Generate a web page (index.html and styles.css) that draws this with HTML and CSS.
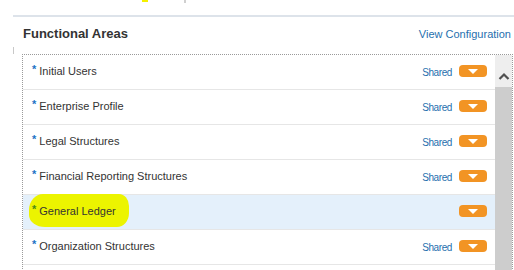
FILE: index.html
```html
<!DOCTYPE html>
<html>
<head>
<meta charset="utf-8">
<link rel="stylesheet" href="styles.css">
</head>
<body>
<div class="page">
  <div class="topbar">
    <span class="mark-yellow"></span>
    <span class="mark-gray"></span>
  </div>
  <div class="header">
    <h2 class="title">Functional Areas</h2>
    <a class="link">View Configuration</a>
  </div>
  <div class="tick"></div>
  <div class="panel">
    <div class="list">
      <div class="row"><span class="req">*</span><span class="name">Initial Users</span><span class="shared">Shared</span><span class="btn"><span class="tri"></span></span></div>
      <div class="row"><span class="req">*</span><span class="name">Enterprise Profile</span><span class="shared">Shared</span><span class="btn"><span class="tri"></span></span></div>
      <div class="row"><span class="req">*</span><span class="name">Legal Structures</span><span class="shared">Shared</span><span class="btn"><span class="tri"></span></span></div>
      <div class="row"><span class="req">*</span><span class="name">Financial Reporting Structures</span><span class="shared">Shared</span><span class="btn"><span class="tri"></span></span></div>
      <div class="row selected"><span class="hl"></span><span class="req">*</span><span class="name">General Ledger</span><span class="btn"><span class="tri"></span></span></div>
      <div class="row"><span class="req">*</span><span class="name">Organization Structures</span><span class="shared">Shared</span><span class="btn"><span class="tri"></span></span></div>
    </div>
    <div class="scrollbar">
      <div class="arrow">
        <svg width="12" height="8" viewBox="0 0 12 8"><path d="M1.5 7 L6 2.5 L10.5 7" fill="none" stroke="#505050" stroke-width="2.2"/></svg>
      </div>
      <div class="thumb"></div>
    </div>
  </div>
</div>
</body>
</html>
```

FILE: styles.css
```css
html, body {
  margin: 0;
  padding: 0;
  background: #ffffff;
  overflow: hidden;
}
.page {
  width: 514px;
  height: 270px;
  font-family: "Liberation Sans", Arial, sans-serif;
  color: #333333;
  overflow: hidden;
}
.topbar {
  height: 15px;
  margin-left: 13px;
  border-bottom: 2px solid #dde3ea;
  position: relative;
}
.mark-yellow {
  position: absolute;
  left: 129px;
  top: 0;
  width: 6px;
  height: 2px;
  background: #f4f000;
}
.mark-gray {
  position: absolute;
  left: 171px;
  top: 0;
  width: 2px;
  height: 3px;
  background: #d0d0d0;
}
.header {
  display: flex;
  justify-content: space-between;
  align-items: flex-end;
  height: 25px;
  padding-left: 23px;
  padding-right: 3px;
}
.title {
  margin: 0;
  font-size: 13px;
  font-weight: bold;
  color: #333333;
  line-height: 16px;
}
.link {
  font-size: 11px;
  color: #1f6fae;
  line-height: 15px;
}
.tick {
  margin-left: 13px;
  margin-top: 5px;
  width: 1px;
  height: 7px;
  background: #c8c8c8;
}
.panel {
  display: flex;
  margin-left: 22px;
  width: 489px;
  height: 230px;
  border-top: 1px dotted #9a9a9a;
  border-left: 1px dotted #9a9a9a;
  border-right: 1px dotted #9a9a9a;
}
.list {
  flex: 1;
}
.row {
  position: relative;
  display: flex;
  align-items: center;
  height: 34px;
  border-bottom: 1px solid #e6e6e6;
  padding-left: 9px;
  padding-right: 8px;
  font-size: 11px;
}
.row.selected {
  background: #e4f0fb;
}
.hl {
  position: absolute;
  left: 6px;
  top: -1px;
  width: 100px;
  height: 33px;
  background: #ecf400;
  border-radius: 14px 10px 12px 16px / 16px 12px 14px 12px;
}
.req {
  position: relative;
  color: #1a73c5;
  font-size: 11px;
  font-weight: bold;
  margin-right: 3px;
  top: -3px;
}
.selected .req {
  color: #4a8a1a;
}
.name {
  position: relative;
  flex: 1;
  color: #333333;
  top: -1px;
}
.shared {
  color: #1f6fae;
  font-size: 10px;
  letter-spacing: -0.4px;
  margin-right: 7px;
}
.btn {
  position: relative;
  top: -1px;
  width: 28px;
  height: 12px;
  border-radius: 4px;
  background: #f29424;
  display: flex;
  align-items: center;
  justify-content: center;
}
.tri {
  width: 0;
  height: 0;
  border-left: 5px solid transparent;
  border-right: 5px solid transparent;
  border-top: 5px solid #ffffff;
}
.scrollbar {
  width: 17px;
  background: #cdcdcd;
  display: flex;
  flex-direction: column;
}
.arrow {
  height: 32px;
  background: #eeeeee;
  display: flex;
  align-items: flex-end;
  justify-content: center;
  box-sizing: border-box;
  padding-bottom: 7px;
}
.thumb {
  flex: 1;
}
```
